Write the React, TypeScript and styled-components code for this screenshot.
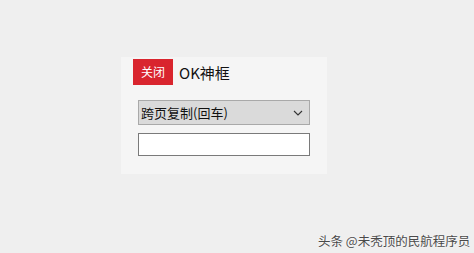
import styled, { createGlobalStyle } from "styled-components";

const GlobalStyle = createGlobalStyle`
  html, body {
    margin: 0;
    padding: 0;
    background: #efefef;
    font-family: "Noto Sans CJK SC", "Liberation Sans", sans-serif;
  }
`;

const Page = styled.div`
  position: relative;
  width: 474px;
  height: 253px;
  padding: 57px 0 0 121px;
  box-sizing: border-box;
`;

const Panel = styled.div`
  width: 206px;
  height: 117px;
  background: #f5f5f5;
  padding: 2px 0 0 12px;
  box-sizing: border-box;
  display: flex;
  flex-direction: column;
`;

const Header = styled.div`
  display: flex;
  align-items: center;
  gap: 6px;
`;

const CloseButton = styled.button`
  width: 40px;
  height: 26px;
  border: none;
  padding: 0;
  background: #d9252e;
  color: #ffffff;
  font-family: "Noto Sans CJK SC", sans-serif;
  font-size: 12px;
  line-height: 26px;
`;

const Title = styled.span`
  font-size: 15px;
  color: #111111;
`;

const Body = styled.div`
  display: flex;
  flex-direction: column;
  gap: 8px;
  margin: 15px 0 0 5px;
`;

const Select = styled.div`
  width: 172px;
  height: 25px;
  box-sizing: border-box;
  border: 1px solid #a9a9a9;
  background: #dadada;
  display: flex;
  align-items: center;
  justify-content: space-between;
  padding: 0 6px 0 2px;
  font-size: 13px;
  color: #111111;
`;

const TextInput = styled.input`
  width: 172px;
  height: 23px;
  box-sizing: border-box;
  border: 1px solid #7a7a7a;
  background: #ffffff;
  margin: 0;
  outline: none;
`;

const Watermark = styled.div`
  position: absolute;
  left: 318px;
  top: 231px;
  font-size: 12.5px;
  color: #4a4a4a;
  text-shadow: 0 0 2px #ffffff;
  white-space: nowrap;
`;

export default function App() {
  return (
    <Page>
      <GlobalStyle />
      <Panel>
        <Header>
          <CloseButton>关闭</CloseButton>
          <Title>OK神框</Title>
        </Header>
        <Body>
          <Select>
            <span>跨页复制(回车)</span>
            <svg width="10" height="6" viewBox="0 0 10 6">
              <path d="M1 1 L5 5 L9 1" fill="none" stroke="#333" strokeWidth="1.1" />
            </svg>
          </Select>
          <TextInput />
        </Body>
      </Panel>
      <Watermark>头条 @未秃顶的民航程序员</Watermark>
    </Page>
  );
}
